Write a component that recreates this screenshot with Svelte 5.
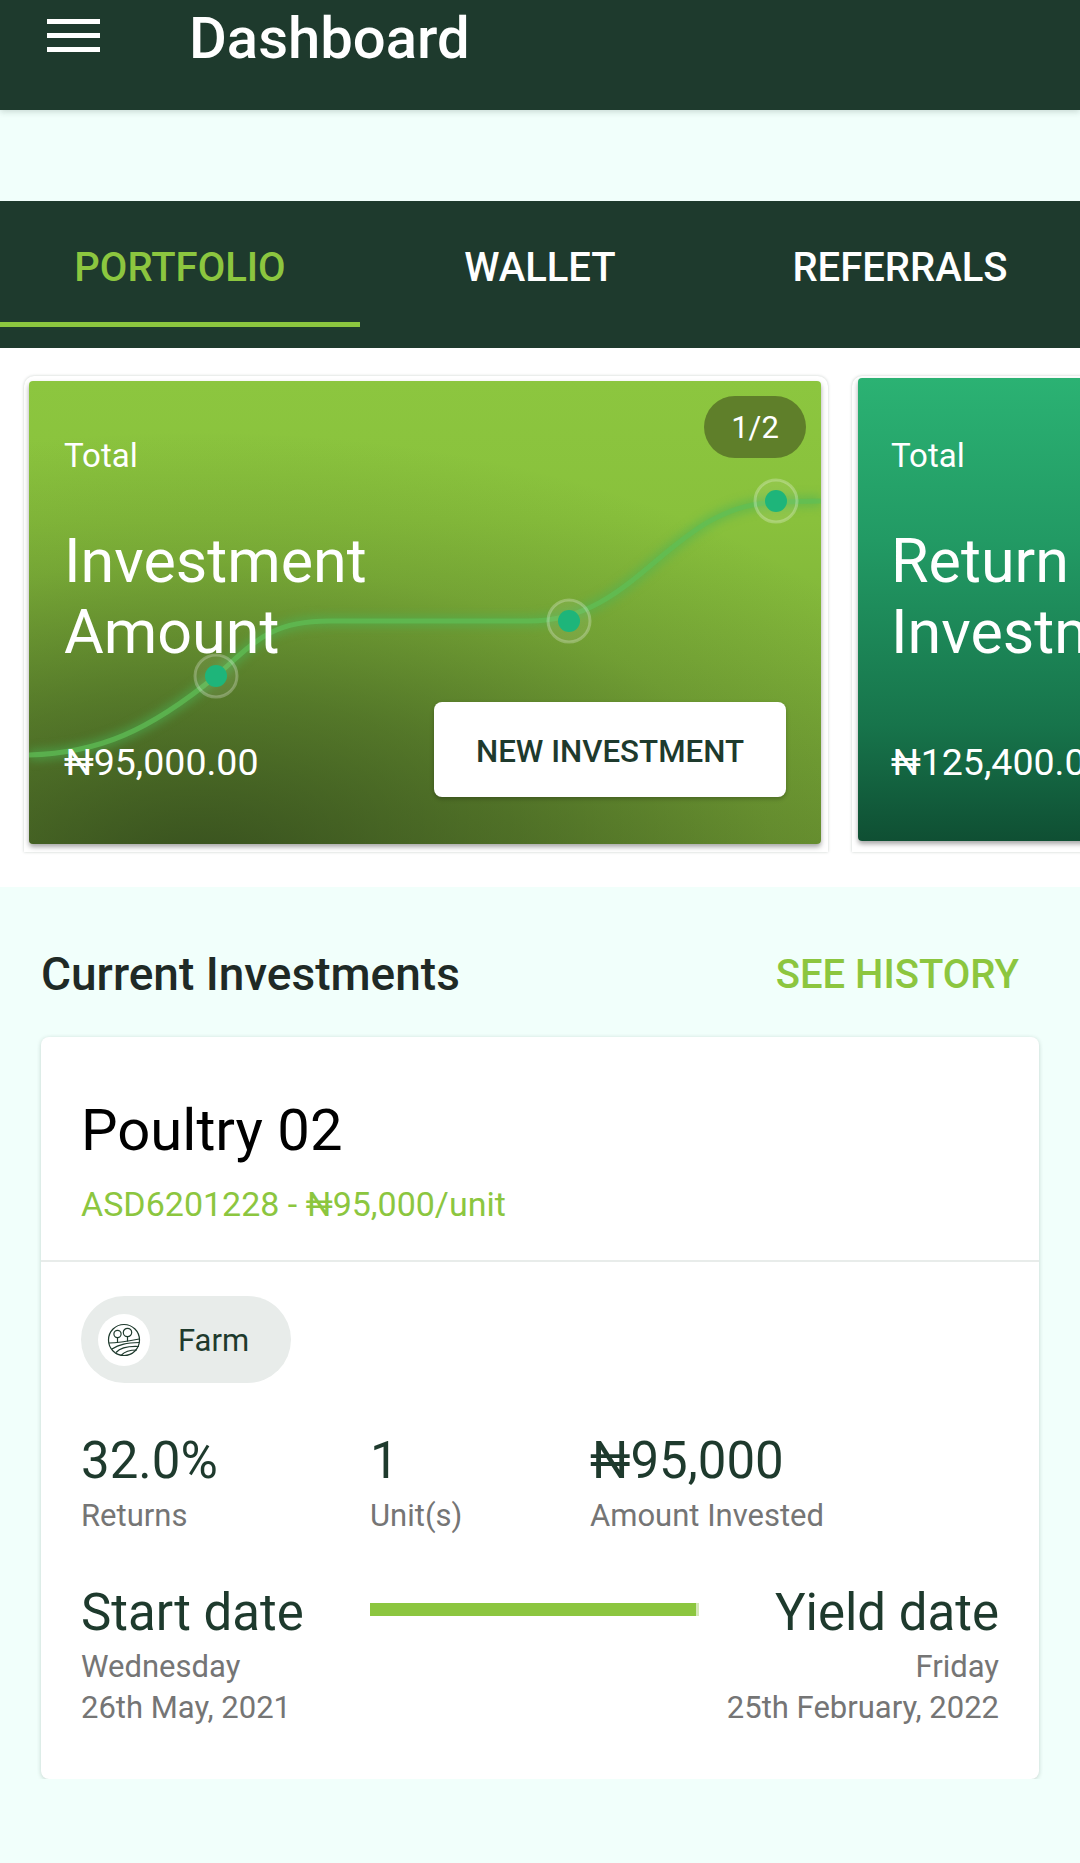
<script>
	const tabs = ['PORTFOLIO', 'WALLET', 'REFERRALS'];
	const active = 'PORTFOLIO';
	const stats = [
		{ value: '32.0%', label: 'Returns' },
		{ value: '1', label: 'Unit(s)' },
		{ value: '₦95,000', label: 'Amount Invested' }
	];
	const nodes = [
		[187, 295],
		[540, 240],
		[747, 120]
	];
	const curve = 'M0 374 C70 372 120 350 187 295 C225 262 240 240 300 240 L500 240 C610 240 640 125 747 121 L792 120';
</script>

<header class="appbar">
	<svg class="menu" width="53" height="33" viewBox="0 0 53 33" aria-hidden="true">
		<rect y="0" width="53" height="5" fill="#fff" />
		<rect y="14" width="53" height="5" fill="#fff" />
		<rect y="28" width="53" height="5" fill="#fff" />
	</svg>
	<h1>Dashboard</h1>
</header>

<nav class="tabs">
	{#each tabs as tab}
		<div class="tab" class:active={tab === active}>{tab}</div>
	{/each}
</nav>

<section class="slider">
	<div class="frame">
		<div class="hero green">
			<svg class="chart" viewBox="0 0 792 463" width="792" height="463" aria-hidden="true">
				<path class="glow" d={curve} fill="none" stroke="#4cb355" stroke-opacity="0.5" stroke-width="12" />
				<path d={curve} fill="none" stroke="#5fbf55" stroke-opacity="0.7" stroke-width="5" />
				{#each nodes as [x, y]}
					<circle cx={x} cy={y} r="21" fill="#ffffff" fill-opacity="0.07" stroke="#ffffff" stroke-opacity="0.25" stroke-width="3" />
					<circle cx={x} cy={y} r="11" fill="#1eb57a" />
				{/each}
			</svg>
			<span class="count">1/2</span>
			<div class="small">Total</div>
			<div class="big">Investment<br />Amount</div>
			<div class="foot">
				<span class="amount">₦95,000.00</span>
				<span class="cta">NEW INVESTMENT</span>
			</div>
		</div>
	</div>
	<div class="frame second">
		<div class="hero teal">
			<div class="small">Total</div>
			<div class="big">Return on<br />Investment</div>
			<div class="foot">
				<span class="amount">₦125,400.00</span>
			</div>
		</div>
	</div>
</section>

<main class="content">
	<div class="section-head">
		<h2>Current Investments</h2>
		<span class="history">SEE HISTORY</span>
	</div>

	<article class="card">
		<div class="card-top">
			<div class="name">Poultry 02</div>
			<div class="code">ASD6201228 - ₦95,000/unit</div>
		</div>
		<div class="card-body">
			<div class="chip">
				<span class="chip-icon">
					<svg width="34" height="34" viewBox="0 0 34 34" fill="none" stroke="#1e3a2d" stroke-width="1.2" aria-hidden="true">
						<circle cx="17" cy="17" r="15.5" />
						<circle cx="10.5" cy="11" r="3.6" />
						<circle cx="20.5" cy="9.5" r="4.2" />
						<path d="M10.5 14.6V20M20.5 13.7V18.5" />
						<path d="M2 20C10 20 22 18 32.2 16" />
						<path d="M5 26C12 21 20 20 32.5 19.5" />
						<path d="M9 29.5C14 24 22 23 32 23.5" />
						<path d="M14.5 32C18 28 23 27 30 27" />
					</svg>
				</span>
				<span class="chip-label">Farm</span>
			</div>

			<div class="stats">
				{#each stats as stat}
					<div class="stat">
						<div class="stat-value">{stat.value}</div>
						<div class="muted">{stat.label}</div>
					</div>
				{/each}
			</div>

			<div class="dates">
				<div>
					<div class="stat-value">Start date</div>
					<div class="muted first">Wednesday</div>
					<div class="muted">26th May, 2021</div>
				</div>
				<div class="progress"></div>
				<div class="end">
					<div class="stat-value">Yield date</div>
					<div class="muted first">Friday</div>
					<div class="muted">25th February, 2022</div>
				</div>
			</div>
		</div>
	</article>
</main>

<style>
	:global(body) {
		background: #f1fffb;
		font-family: Roboto, 'Noto Sans', sans-serif;
		overflow-x: hidden;
	}

	.appbar {
		height: 110px;
		background: #1e3a2d;
		display: flex;
		align-items: flex-start;
		box-shadow: 0 2px 6px rgba(30, 58, 45, 0.18);
	}
	.menu {
		margin: 19px 0 0 47px;
	}
	h1 {
		margin: 5px 0 0 89px;
		font-size: 58px;
		line-height: 66px;
		font-weight: 500;
		color: #fff;
	}

	.tabs {
		margin-top: 91px;
		height: 147px;
		background: #1e3a2d;
		display: grid;
		grid-template-columns: repeat(3, 360px);
	}
	.tab {
		height: 126px;
		padding-top: 11px;
		box-sizing: border-box;
		display: flex;
		align-items: center;
		justify-content: center;
		font-size: 40px;
		font-weight: 500;
		color: #fff;
		border-bottom: 5px solid transparent;
	}
	.tab.active {
		color: #8cc63f;
		border-bottom-color: #8cc63f;
	}

	.slider {
		height: 539px;
		background: #fff;
		display: flex;
		gap: 24px;
		padding: 28px 0 0 24px;
		box-sizing: border-box;
		overflow: hidden;
	}
	.frame {
		flex: none;
		width: 804px;
		height: 476px;
		box-sizing: border-box;
		padding: 5px 5px 0;
		border-radius: 10px 10px 0 0;
		box-shadow: 0 0 3px rgba(30, 58, 45, 0.25);
	}
	.frame.second {
		padding-top: 2px;
		padding-left: 6px;
	}
	.hero {
		position: relative;
		height: 463px;
		width: 792px;
		box-sizing: border-box;
		padding: 56px 35px 0 35px;
		border-radius: 4px;
		color: #fff;
		box-shadow: 0 3px 5px rgba(0, 0, 0, 0.35);
		overflow: hidden;
	}
	.second .hero {
		padding: 59px 0 0 33px;
	}
	.green {
		background: linear-gradient(180deg, #8cc63f 0%, #89c13c 30%, #7fb239 60%, #6f9a32 100%);
	}
	.green::after {
		content: '';
		position: absolute;
		inset: 0;
		background: radial-gradient(
			ellipse 820px 440px at 170px 490px,
			rgba(40, 60, 25, 0.78),
			rgba(40, 60, 25, 0.46) 40%,
			rgba(40, 60, 25, 0.17) 70%,
			rgba(40, 60, 25, 0)
		);
	}
	.teal {
		background: linear-gradient(180deg, #2bb273 0%, #229a64 35%, #17744b 75%, #0f4f33 100%);
	}
	.chart {
		position: absolute;
		left: 0;
		top: 0;
		z-index: 1;
	}
	.glow {
		filter: blur(4px);
	}
	.count {
		position: absolute;
		top: 15px;
		right: 15px;
		z-index: 2;
		width: 102px;
		height: 62px;
		border-radius: 31px;
		background: #5f7f2a;
		display: flex;
		align-items: center;
		justify-content: center;
		font-size: 31px;
	}
	.small,
	.big {
		position: relative;
		z-index: 2;
	}
	.small {
		font-size: 33px;
		line-height: 38px;
	}
	.big {
		margin-top: 51px;
		font-size: 61px;
		line-height: 71px;
		white-space: nowrap;
	}
	.foot {
		display: flex;
		justify-content: space-between;
		align-items: flex-start;
		margin-top: 34px;
	}
	.amount {
		position: relative;
		z-index: 2;
		font-size: 37.5px;
		line-height: 44px;
		margin-top: 38px;
		white-space: nowrap;
	}
	.cta {
		position: relative;
		z-index: 2;
		width: 352px;
		height: 95px;
		border-radius: 8px;
		background: #fff;
		color: #1e3a2d;
		font-size: 31.3px;
		font-weight: 500;
		display: flex;
		align-items: center;
		justify-content: center;
		padding-top: 4px;
		box-sizing: border-box;
		box-shadow: 0 2px 4px rgba(0, 0, 0, 0.25);
	}

	.content {
		padding: 58px 41px 0;
	}
	.section-head {
		display: flex;
		justify-content: space-between;
		align-items: center;
		height: 58px;
		padding-right: 20px;
		margin-bottom: 34px;
	}
	h2 {
		margin: 0;
		font-size: 46px;
		font-weight: 500;
		color: #1f2a26;
	}
	.history {
		font-size: 40px;
		font-weight: 500;
		color: #8cc63f;
	}

	.card {
		height: 742px;
		background: #fff;
		border-radius: 8px;
		box-shadow: 0 1px 4px rgba(30, 58, 45, 0.22);
		overflow: hidden;
	}
	.card-top {
		height: 225px;
		box-sizing: border-box;
		padding: 59px 40px 0;
		border-bottom: 2px solid #e8ecea;
	}
	.name {
		font-size: 58px;
		line-height: 68px;
		color: #000;
	}
	.code {
		margin-top: 20px;
		font-size: 34px;
		line-height: 40px;
		color: #8cc63f;
	}
	.card-body {
		padding: 34px 40px 0;
	}
	.chip {
		display: inline-flex;
		align-items: center;
		width: 210px;
		height: 87px;
		border-radius: 44px;
		background: #e8ecea;
		box-sizing: border-box;
		padding-left: 17px;
	}
	.chip-icon {
		width: 52px;
		height: 52px;
		border-radius: 50%;
		background: #fff;
		display: flex;
		align-items: center;
		justify-content: center;
	}
	.chip-label {
		margin-left: 28px;
		padding-top: 2px;
		font-size: 31px;
		color: #1e3a2d;
	}
	.stats {
		display: grid;
		grid-template-columns: 289px 220px 1fr;
		margin-top: 48px;
	}
	.stat-value {
		font-size: 51px;
		line-height: 60px;
		color: #1e3a2d;
	}
	.muted {
		font-size: 31px;
		line-height: 41px;
		color: #757575;
		white-space: nowrap;
	}
	.stat .muted {
		margin-top: 4px;
	}
	.first {
		margin-top: 3px;
	}
	.dates {
		display: grid;
		grid-template-columns: 289px 329px 1fr;
		margin-top: 47px;
	}
	.progress {
		height: 13px;
		margin-top: 20px;
		box-sizing: border-box;
		background: #8cc63f;
		border-right: 3px solid #d5e8b8;
	}
	.end {
		text-align: right;
	}
</style>
